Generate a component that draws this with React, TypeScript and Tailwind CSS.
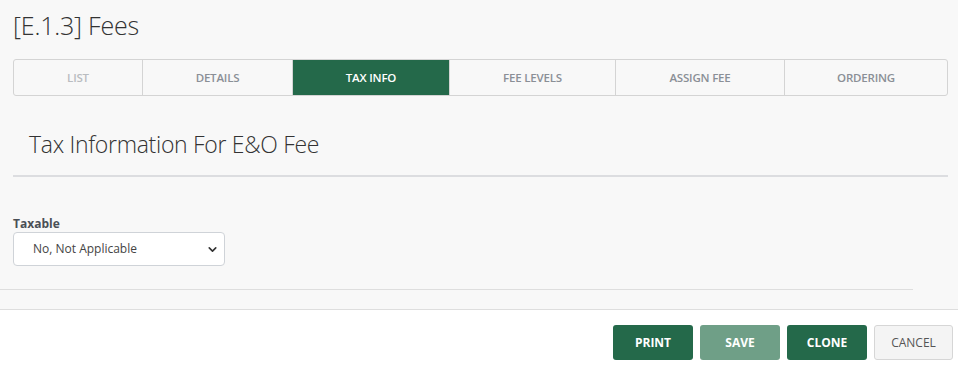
import { ChevronDown } from 'lucide-react'

const tabs = [
  { label: 'LIST', w: 'w-[128px]', state: 'disabled' },
  { label: 'DETAILS', w: 'w-[150px]', state: '' },
  { label: 'TAX INFO', w: 'w-[157px]', state: 'active' },
  { label: 'FEE LEVELS', w: 'w-[166px]', state: '' },
  { label: 'ASSIGN FEE', w: 'w-[169px]', state: '' },
  { label: 'ORDERING', w: 'flex-1', state: '' },
]

export default function App() {
  return (
    <div className="flex h-[370px] w-[958px] flex-col bg-[#f8f8f8] font-['Open_Sans','Noto_Sans',sans-serif] text-[#333]">
      <div className="pl-[13px] pr-[10px]">
        <h1 className="pt-[8px] text-[25px] font-light leading-[34px] tracking-[-0.2px] text-[#333]">[E.1.3] Fees</h1>

        <div className="mt-[17px] flex h-[37px] overflow-hidden rounded-[3px] border border-[#d4d4d4]">
          {tabs.map((t, i) => (
            <div
              key={t.label}
              className={`${t.w} flex items-center justify-center text-[11.5px] font-semibold tracking-[-0.2px] ${
                i > 0 ? 'border-l border-[#d4d4d4]' : ''
              } ${
                t.state === 'active'
                  ? 'bg-[#24694a] text-white'
                  : t.state === 'disabled'
                  ? 'text-[#b9bcc0]'
                  : 'text-[#8a8f96]'
              }`}
            >
              {t.label}
            </div>
          ))}
        </div>

        <h2 className="mt-[33px] pl-[16px] text-[23px] font-light leading-[30px] tracking-[-0.3px] text-[#333]">
          Tax Information For E&amp;O Fee
        </h2>
        <div className="mt-[16px] h-[2px] bg-[#dcdde0]" />

        <label className="mt-[39px] block text-[12px] font-bold leading-[16px] text-[#4a4f55]">Taxable</label>
        <div className="relative flex h-[34px] w-[212px] items-center rounded-[4px] border border-[#cfd3d8] bg-white pl-[19px] text-[12px] text-[#444]">
          No, Not Applicable
          <ChevronDown className="absolute right-[5px] top-[10px] h-[13px] w-[13px] text-[#333]" strokeWidth={3} />
        </div>
      </div>

      <div className="mt-[23px] h-px w-[913px] bg-[#dedede]" />

      <div className="mt-[19px] flex flex-1 items-start justify-end gap-[7px] border-t border-[#dedede] bg-white pr-[5px] pt-[15px]">
        <button className="h-[35px] w-[80px] rounded-[3px] bg-[#24694a] text-[12px] font-bold text-white">PRINT</button>
        <button className="h-[35px] w-[80px] rounded-[3px] bg-[#6f9f87] text-[12px] font-bold text-white">SAVE</button>
        <button className="h-[35px] w-[80px] rounded-[3px] bg-[#24694a] text-[12px] font-bold text-white">CLONE</button>
        <button className="h-[35px] w-[79px] rounded-[3px] border border-[#d6d6d6] bg-[#f4f4f4] text-[12px] text-[#555]">CANCEL</button>
      </div>
    </div>
  )
}
